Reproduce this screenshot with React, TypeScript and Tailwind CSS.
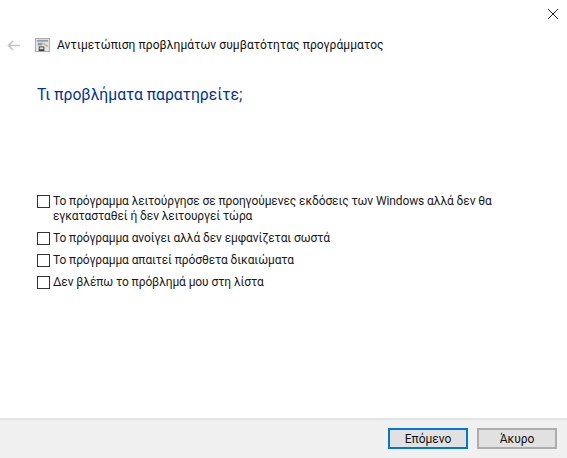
export default function App() {
  const font = { fontFamily: 'Roboto, "Noto Sans", sans-serif' };
  const Row = ({ children, cls }: { children: React.ReactNode; cls: string }) => (
    <div className={"flex items-start " + cls}>
      <span className="h-[13px] w-[13px] shrink-0 border border-[#333333] bg-white" />
      <span className="-mt-[1px] ml-[3px] text-[12px] leading-[15px] tracking-[-0.1px] text-[#1a1a1a]">{children}</span>
    </div>
  );
  return (
    <div className="flex h-[458px] w-[567px] flex-col overflow-hidden bg-white" style={font}>
      <div className="flex h-[33px] justify-end">
        <svg width="10" height="10" viewBox="0 0 10 10" className="mr-[9px] mt-[9px]" fill="none" stroke="#222" strokeWidth="1">
          <path d="M0 0L10 10M10 0L0 10" />
        </svg>
      </div>
      <div className="flex h-[24px] items-center">
        <svg width="13" height="11" viewBox="0 0 13 11" className="ml-[7px]" fill="none" stroke="#c4c4c4" strokeWidth="1.6">
          <path d="M13 5.5H1.5M6 1L1.5 5.5L6 10" />
        </svg>
        <svg width="15" height="14" viewBox="0 0 16 15" className="ml-[15px]">
          <rect x="0.5" y="0.5" width="15" height="14" fill="#e6e6e6" stroke="#a8a8a8" />
          <rect x="2" y="2" width="12" height="2" fill="#8fa0b5" />
          <path d="M3 5h6l-2 3H3z" fill="#7fa3b8" />
          <path d="M9 5l5 3v2l-5-3z" fill="#d8b060" />
          <rect x="4" y="9" width="6" height="5" fill="#444" />
          <rect x="5" y="10" width="4" height="2" fill="#ddd" />
        </svg>
        <span className="ml-[7px] whitespace-nowrap text-[12px] tracking-[0.08px] text-[#111111]">Αντιμετώπιση προβλημάτων συμβατότητας προγράμματος</span>
      </div>
      <div className="ml-[37px] mt-[26px] h-[24px] whitespace-nowrap text-[15.7px] leading-[24px] text-[#003399]">Τι προβλήματα παρατηρείτε;</div>
      <div className="ml-[37px] mt-[88px] flex w-[470px] flex-col">
        <Row cls="">Το πρόγραμμα λειτούργησε σε προηγούμενες εκδόσεις των Windows αλλά δεν θα εγκατασταθεί ή δεν λειτουργεί τώρα</Row>
        <Row cls="mt-[8px]">Το πρόγραμμα ανοίγει αλλά δεν εμφανίζεται σωστά</Row>
        <Row cls="mt-[8px]">Το πρόγραμμα απαιτεί πρόσθετα δικαιώματα</Row>
        <Row cls="mt-[8px]">Δεν βλέπω το πρόβλημά μου στη λίστα</Row>
      </div>
      <div className="mt-auto flex h-[40px] items-start justify-end border-t-2 border-[#e3e3e3] bg-[#f0f0f0] pr-[10px] pt-[8px]">
        <button className="h-[21px] w-[80px] border-2 border-[#0078d7] bg-[#e1e1e1] text-[12px] leading-[16px] text-[#111111]">Επόμενο</button>
        <button className="ml-[9px] h-[21px] w-[80px] border-2 border-[#adadad] bg-[#e1e1e1] text-[12px] leading-[16px] text-[#111111]">Άκυρο</button>
      </div>
    </div>
  );
}
